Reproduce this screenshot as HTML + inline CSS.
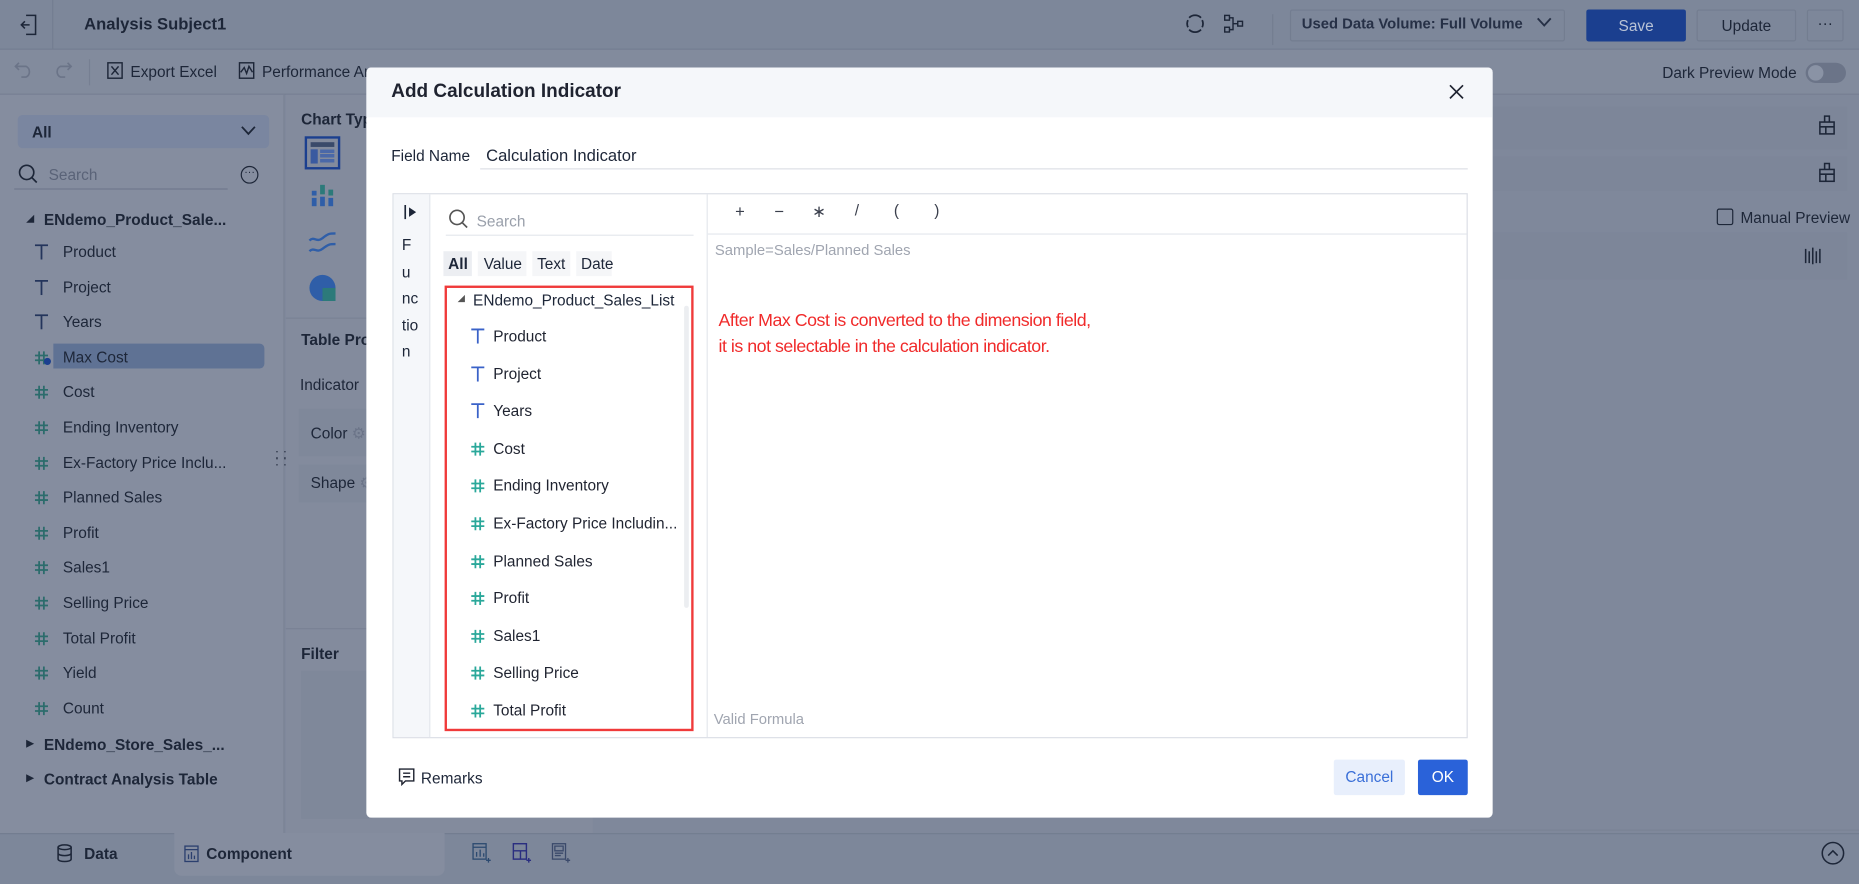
<!DOCTYPE html>
<html><head><meta charset="utf-8"><style>
*{box-sizing:border-box;margin:0;padding:0}
html,body{width:1859px;height:884px;overflow:hidden;background:#7f889b}
#w{position:absolute;left:0;top:0;width:1568px;height:746px;transform:scale(1.18559,1.185);transform-origin:0 0;font-family:"Liberation Sans",sans-serif;font-size:13px;color:#1d2638}
.a{position:absolute}
.t{position:absolute;white-space:nowrap}
</style></head><body><div id="w">
<!-- top bar -->
<div class="a" style="left:0;top:0;width:1568px;height:42px;background:#7d879a;border-bottom:1px solid #737d90"></div>
<div class="a" style="left:44px;top:0;width:1px;height:42px;background:#737d90"></div>
<svg class="a" style="left:16px;top:12px" width="16" height="18" viewBox="0 0 16 18" fill="none" stroke="#1d2638" stroke-width="1.3"><path d="M6 1h8v16H6M9 9H2M5 6L2 9l3 3"/></svg>
<div class="t" style="left:71px;top:12px;font-size:14px;font-weight:bold">Analysis Subject1</div>
<svg class="a" style="left:999px;top:11px" width="18" height="18" viewBox="0 0 18 18" fill="none" stroke="#1d2638" stroke-width="1.5"><path d="M4 4a7 7 0 0 1 10 0M14 14a7 7 0 0 1-10 0M3 6a7 7 0 0 0 0 6M15 6a7 7 0 0 1 0 6"/></svg>
<svg class="a" style="left:1032px;top:12px" width="18" height="16" viewBox="0 0 18 16" fill="none" stroke="#1d2638" stroke-width="1.2"><rect x="1" y="1" width="4" height="4"/><rect x="1" y="11" width="4" height="4"/><rect x="12" y="6" width="4" height="4"/><path d="M5 3h3v10H5M8 8h4"/></svg>
<div class="a" style="left:1073px;top:12px;width:1px;height:26px;background:#737d90"></div>
<div class="a" style="left:1088px;top:8px;width:232px;height:27px;border:1px solid #737d90;border-radius:2px"></div>
<div class="t" style="left:1098px;top:13px;font-size:12.5px;font-weight:bold;color:#263046">Used Data Volume: Full Volume</div>
<svg class="a" style="left:1296px;top:14px" width="13" height="9" viewBox="0 0 13 9" fill="none" stroke="#263046" stroke-width="1.6"><path d="M1 1.5l5.5 6 5.5-6"/></svg>
<div class="a" style="left:1338px;top:8px;width:84px;height:27px;background:#1b3f8f;border-radius:2px;color:#b9c3d6;text-align:center;line-height:27px;font-size:13px">Save</div>
<div class="a" style="left:1431px;top:8px;width:84px;height:27px;border:1px solid #737d90;border-radius:2px;text-align:center;line-height:25px;font-size:13px">Update</div>
<div class="a" style="left:1524px;top:8px;width:31px;height:27px;border:1px solid #737d90;border-radius:2px;text-align:center;line-height:22px;font-size:13px">···</div>
<!-- toolbar -->
<div class="a" style="left:0;top:42px;width:1568px;height:38px;background:#828b9d;border-bottom:1px solid #767f92"></div>
<svg class="a" style="left:12px;top:52px" width="16" height="14" viewBox="0 0 16 14" fill="none" stroke="#6b7488" stroke-width="1.4"><path d="M4 1L1 4l3 3M1 4h9a5 5 0 0 1 0 9H6"/></svg>
<svg class="a" style="left:45px;top:52px" width="16" height="14" viewBox="0 0 16 14" fill="none" stroke="#6b7488" stroke-width="1.4"><path d="M12 1l3 3-3 3M15 4H6a5 5 0 0 0 0 9h4"/></svg>
<div class="a" style="left:75px;top:50px;width:1px;height:22px;background:#767f92"></div>
<svg class="a" style="left:90px;top:52px" width="14" height="15" viewBox="0 0 14 15" fill="none" stroke="#1d2638" stroke-width="1.2"><rect x="1" y="1" width="12" height="13"/><path d="M4 4l6 7M10 4l-6 7"/></svg>
<div class="t" style="left:110px;top:53px">Export Excel</div>
<svg class="a" style="left:201px;top:52px" width="14" height="15" viewBox="0 0 14 15" fill="none" stroke="#1d2638" stroke-width="1.2"><rect x="1" y="1" width="12" height="13"/><path d="M2 9l3-4 2 5 2-6 3 5"/></svg>
<div class="t" style="left:221px;top:53px">Performance An</div>
<div class="t" style="left:1402px;top:54px">Dark Preview Mode</div>
<div class="a" style="left:1523px;top:53px;width:34px;height:17px;border-radius:9px;background:#6b7488"></div>
<div class="a" style="left:1525px;top:55px;width:13px;height:13px;border-radius:50%;background:#8a93a5"></div>
<!-- left panel -->
<div class="a" style="left:0;top:80px;width:240px;height:623px;background:#858d9f;border-right:1px solid #7a8295"></div>
<div class="a" style="left:15px;top:97px;width:212px;height:28px;background:#7a86a0;border-radius:4px"></div>
<div class="t" style="left:27px;top:104px;font-weight:bold">All</div>
<svg class="a" style="left:203px;top:106px" width="13" height="9" viewBox="0 0 13 9" fill="none" stroke="#1d2638" stroke-width="1.5"><path d="M1 1l5.5 6L12 1"/></svg>
<svg class="a" style="left:15px;top:138px" width="18" height="18" viewBox="0 0 18 18" fill="none" stroke="#1d2638" stroke-width="1.4"><circle cx="7.5" cy="7.5" r="6"/><path d="M12 12l4 4"/></svg>
<div class="t" style="left:41px;top:140px;color:#5a6378">Search</div>
<div class="a" style="left:12px;top:159px;width:180px;height:1px;background:#6f788c"></div>
<div class="a" style="left:203px;top:140px;width:15px;height:15px;border:1.3px solid #1d2638;border-radius:50%;font-size:9px;text-align:center;line-height:8px">···</div>
<div class="t" style="left:22px;top:179px;font-size:9px">◢</div>
<div class="t" style="left:37px;top:178px;font-weight:bold">ENdemo_Product_Sale...</div>
<div class="a" style="left:45px;top:290px;width:178px;height:21px;background:#5f7294;border-radius:0 4px 4px 0"></div>
<div id="lt"></div>
<div class="t" style="left:22px;top:622px;font-size:9px">▶</div>
<div class="t" style="left:37px;top:621px;font-weight:bold">ENdemo_Store_Sales_...</div>
<div class="t" style="left:22px;top:651px;font-size:9px">▶</div>
<div class="t" style="left:37px;top:650px;font-weight:bold">Contract Analysis Table</div>
<div class="t" style="left:232px;top:380px;font-size:12px;color:#2b3346;line-height:6px">: :<br>: :</div>
<!-- middle panel -->
<div class="a" style="left:241px;top:80px;width:259px;height:623px;background:#838b9d"></div>
<div class="t" style="left:254px;top:93px;font-weight:bold">Chart Typ</div>
<div class="a" style="left:257px;top:115px;width:30px;height:28px;border:2px solid #1b3f8f"></div>
<div class="a" style="left:262px;top:120px;width:20px;height:4px;background:#3a4a6a"></div>
<div class="a" style="left:262px;top:126px;width:6px;height:12px;background:#3a5aa0"></div>
<div class="a" style="left:270px;top:126px;width:12px;height:12px;background:repeating-linear-gradient(#4a68a8 0 3px,transparent 3px 4px)"></div>
<svg class="a" style="left:262px;top:155px" width="20" height="20" viewBox="0 0 20 20" fill="#2f5ea8"><rect x="1" y="6" width="4" height="4"/><rect x="1" y="12" width="4" height="7"/><rect x="8" y="1" width="4" height="8" fill="#2c7a7a"/><rect x="8" y="11" width="4" height="8"/><rect x="15" y="5" width="4" height="5" fill="#2c7a7a"/><rect x="15" y="12" width="4" height="7"/></svg>
<svg class="a" style="left:260px;top:195px" width="24" height="20" viewBox="0 0 24 20" fill="none" stroke="#2f5ea8" stroke-width="2"><path d="M1 8c4-4 6 2 11-2s6-4 11-4M1 17c4-4 6 2 11-2s6-4 11-4"/></svg>
<div class="a" style="left:261px;top:232px;width:22px;height:22px;border-radius:50%;background:#2f5ea8"></div>
<div class="a" style="left:272px;top:243px;width:11px;height:11px;background:#2c7a7a"></div>
<div class="a" style="left:241px;top:268px;width:259px;height:1px;background:#7a8295"></div>
<div class="t" style="left:254px;top:279px;font-weight:bold">Table Pro</div>
<div class="t" style="left:253px;top:317px">Indicator</div>
<div class="a" style="left:252px;top:345px;width:60px;height:40px;background:#7f889a"></div>
<div class="t" style="left:262px;top:358px">Color <span style="color:#6b7488">⚙</span></div>
<div class="a" style="left:252px;top:392px;width:60px;height:32px;background:#7f889a"></div>
<div class="t" style="left:262px;top:400px">Shape <span style="color:#6b7488">⚙</span></div>
<div class="a" style="left:241px;top:530px;width:259px;height:1px;background:#7a8295"></div>
<div class="t" style="left:254px;top:544px;font-weight:bold">Filter</div>
<div class="a" style="left:254px;top:566px;width:60px;height:125px;background:#7f889a"></div>
<!-- right area -->
<div class="a" style="left:1240px;top:90px;width:318px;height:36px;background:#7d8699"></div>
<div class="a" style="left:1240px;top:132px;width:318px;height:29px;background:#7d8699"></div>
<div class="a" style="left:1240px;top:196px;width:318px;height:40px;background:#7d8699"></div>
<svg class="a" style="left:1534px;top:97px" width="14" height="17" viewBox="0 0 14 17" fill="none" stroke="#1d2638" stroke-width="1.3"><rect x="1" y="6" width="12" height="10"/><path d="M5 6V1h4v5M1 10h12M6 10v6"/></svg>
<svg class="a" style="left:1534px;top:137px" width="14" height="17" viewBox="0 0 14 17" fill="none" stroke="#1d2638" stroke-width="1.3"><rect x="1" y="6" width="12" height="10"/><path d="M5 6V1h4v5M1 10h12M6 10v6"/></svg>
<div class="a" style="left:1448px;top:176px;width:14px;height:14px;border:1.3px solid #1d2638;border-radius:2px"></div>
<div class="t" style="left:1468px;top:176px">Manual Preview</div>
<svg class="a" style="left:1522px;top:208px" width="16" height="16" viewBox="0 0 16 16" stroke="#1d2638" stroke-width="1.3"><path d="M1 2v12M4 4v10M7 1v14M10 4v10M13 2v12"/></svg>
<div class="a" style="left:1240px;top:700px;width:328px;height:1px;background:#7a8295"></div>
<!-- bottom bar -->
<div class="a" style="left:0;top:703px;width:1568px;height:43px;background:#7d879a;border-top:1px solid #737d90"></div>
<div class="a" style="left:147px;top:703px;width:228px;height:36px;background:#858d9f;border-radius:0 0 6px 6px"></div>
<svg class="a" style="left:48px;top:712px" width="13" height="16" viewBox="0 0 13 16" fill="none" stroke="#1d2638" stroke-width="1.3"><ellipse cx="6.5" cy="3" rx="5.5" ry="2"/><path d="M1 3v10c0 2.7 11 2.7 11 0V3M1 8c0 2.7 11 2.7 11 0"/></svg>
<div class="t" style="left:71px;top:713px;font-weight:bold">Data</div>
<svg class="a" style="left:155px;top:713px" width="13" height="15" viewBox="0 0 13 15" fill="none" stroke="#2b3f6e" stroke-width="1.1"><rect x="1" y="1" width="11" height="13"/><path d="M1 4h11M4 12V8M6.5 12V6M9 12V9"/></svg>
<div class="t" style="left:174px;top:713px;font-weight:bold">Component</div>
<svg class="a" style="left:398px;top:711px" width="16" height="18" viewBox="0 0 16 18" fill="none" stroke="#2c4a70" stroke-width="1.1"><rect x="1" y="1" width="11" height="13"/><path d="M1 4h11M4 12V8M7 12V6M10 12V9M12 15h4M14 13v4"/></svg>
<svg class="a" style="left:432px;top:711px" width="16" height="18" viewBox="0 0 16 18" fill="none" stroke="#2a2e80" stroke-width="1.2"><rect x="1" y="1" width="11" height="13"/><path d="M1 7h11M7 7v7M12 15h4M14 13v4"/></svg>
<svg class="a" style="left:465px;top:711px" width="16" height="18" viewBox="0 0 16 18" fill="none" stroke="#3b4a6b" stroke-width="1.1"><rect x="1" y="1" width="11" height="13"/><path d="M3 3h7v4H3zM3 9h7M3 11h5M12 15h4M14 13v4"/></svg>
<svg class="a" style="left:1536px;top:710px" width="20" height="20" viewBox="0 0 20 20" fill="none" stroke="#1d2638" stroke-width="1.3"><circle cx="10" cy="10" r="9"/><path d="M6 12l4-4 4 4"/></svg>
<!-- dialog -->
<div class="a" style="left:309px;top:57px;width:950px;height:633px;background:#fff;border-radius:4px;overflow:hidden">
 <div class="a" style="left:0;top:0;width:950px;height:42px;background:#f5f7fa"></div>
</div>
<div class="t" style="left:330px;top:69px;font-size:16px;font-weight:bold;color:#1f2330">Add Calculation Indicator</div>
<svg class="a" style="left:1222px;top:71px" width="13" height="13" viewBox="0 0 13 13" stroke="#1f2330" stroke-width="1.4"><path d="M1 1l11 11M12 1L1 12"/></svg>
<div class="t" style="left:330px;top:124px;font-size:13px">Field Name</div>
<div class="t" style="left:410px;top:123px;font-size:14px">Calculation Indicator</div>
<div class="a" style="left:405px;top:142px;width:833px;height:1px;background:#dcdfe6"></div>
<div class="a" style="left:331px;top:163px;width:907px;height:460px;border:1px solid #dcdfe6"></div>
<div class="a" style="left:332px;top:164px;width:31px;height:458px;background:#f5f7fa;border-right:1px solid #e4e7ed"></div>
<svg class="a" style="left:341px;top:173px" width="12" height="12" viewBox="0 0 12 12" fill="#1d2638"><rect x="0" y="0" width="1.5" height="12"/><path d="M4 2l6 4-6 4z"/></svg>
<div class="t" style="left:339px;top:196px;font-size:13px;line-height:22.5px">F<br>u<br>nc<br>tio<br>n</div>
<div class="a" style="left:596px;top:164px;width:1px;height:458px;background:#e4e7ed"></div>
<div class="a" style="left:597px;top:197px;width:640px;height:1px;background:#e4e7ed"></div>
<div class="t" style="left:620px;top:170px;font-size:14px;color:#3a3f4c">+</div>
<div class="t" style="left:653px;top:170px;font-size:14px;color:#3a3f4c">−</div>
<div class="t" style="left:685px;top:170px;font-size:14px;color:#3a3f4c">∗</div>
<div class="t" style="left:721px;top:170px;font-size:13px;color:#3a3f4c">/</div>
<div class="t" style="left:754px;top:170px;font-size:13px;color:#3a3f4c">(</div>
<div class="t" style="left:788px;top:170px;font-size:13px;color:#3a3f4c">)</div>
<svg class="a" style="left:378px;top:176px" width="18" height="18" viewBox="0 0 18 18" fill="none" stroke="#555" stroke-width="1.4"><circle cx="7.5" cy="7.5" r="6"/><path d="M12 12l4 4"/></svg>
<div class="t" style="left:402px;top:179px;color:#9aa0ab">Search</div>
<div class="a" style="left:376px;top:198px;width:209px;height:1px;background:#e4e7ed"></div>
<div class="a" style="left:374px;top:212px;width:24px;height:21px;background:#eceef2"></div>
<div class="a" style="left:403px;top:212px;width:41px;height:21px;background:#f5f6f8"></div>
<div class="a" style="left:449px;top:212px;width:32px;height:21px;background:#f5f6f8"></div>
<div class="a" style="left:486px;top:212px;width:30px;height:21px;background:#f5f6f8"></div>
<div class="t" style="left:378px;top:215px;font-weight:bold">All</div>
<div class="t" style="left:408px;top:215px">Value</div>
<div class="t" style="left:453px;top:215px">Text</div>
<div class="t" style="left:490px;top:215px">Date</div>
<div class="a" style="left:375px;top:241px;width:210px;height:376px;border:2px solid #f03a3a"></div>
<div class="a" style="left:577px;top:258px;width:4px;height:255px;background:#eceef1;border-radius:2px"></div>
<div class="t" style="left:386px;top:247px;font-size:8px;color:#555">◢</div>
<div class="t" style="left:399px;top:246px">ENdemo_Product_Sales_List</div>
<div id="dt"></div>
<div class="t" style="left:606px;top:260px;font-size:15px;color:#f02a2a;line-height:22px;letter-spacing:-0.4px">After Max Cost is converted to the dimension field,<br>it is not selectable in the calculation indicator.</div>
<div class="t" style="left:603px;top:204px;color:#a0a5b0;font-size:12.5px">Sample=Sales/Planned Sales</div>
<div class="t" style="left:602px;top:600px;color:#a0a5b0;font-size:12.5px">Valid Formula</div>
<svg class="a" style="left:336px;top:648px" width="14" height="16" viewBox="0 0 14 16" fill="none" stroke="#1f2330" stroke-width="1.2"><path d="M1 1h12v10H6l-3 3v-3H1z"/><path d="M4 4.5h6M4 7.5h6"/></svg>
<div class="t" style="left:355px;top:649px">Remarks</div>
<div class="a" style="left:1125px;top:641px;width:60px;height:30px;background:#e8effc;border-radius:2px;color:#3a6fd8;text-align:center;line-height:30px">Cancel</div>
<div class="a" style="left:1196px;top:641px;width:42px;height:30px;background:#2a62d9;border-radius:2px;color:#fff;text-align:center;line-height:30px">OK</div>
</div>
<script>
function T(x,y,c){return '<svg class="a" style="left:'+x+'px;top:'+y+'px" width="12" height="13" viewBox="0 0 12 13" fill="none" stroke="'+c+'" stroke-width="1.5"><path d="M0.5 1h11M6 1v12"/></svg>';}
function H(x,y,c){return '<svg class="a" style="left:'+x+'px;top:'+y+'px" width="12" height="12" viewBox="0 0 12 12" fill="none" stroke="'+c+'" stroke-width="1.5"><path d="M4 0.5v11M8 0.5v11M0.5 4h11M0.5 8h11"/></svg>';}
var L=[["T","Product"],["T","Project"],["T","Years"],["H","Max Cost"],["#","Cost"],["#","Ending Inventory"],["#","Ex-Factory Price Inclu..."],["#","Planned Sales"],["#","Profit"],["#","Sales1"],["#","Selling Price"],["#","Total Profit"],["#","Yield"],["#","Count"]];
var h="";L.forEach(function(e,i){var y=205+i*29.6;
var ic=e[0]=="T"?T(29,y+1,"#24355c"):H(29,y+2,"#2c6c6c");
if(e[0]=="H")ic+='<div class="a" style="left:37px;top:'+(y+8)+'px;width:6px;height:6px;border-radius:50%;background:#1b3f8f"></div>';
h+=ic+'<div class="t" style="left:53px;top:'+y+'px">'+e[1]+'</div>';});
document.getElementById("lt").innerHTML=h;
var D=[["T","Product"],["T","Project"],["T","Years"],["#","Cost"],["#","Ending Inventory"],["#","Ex-Factory Price Includin..."],["#","Planned Sales"],["#","Profit"],["#","Sales1"],["#","Selling Price"],["#","Total Profit"]];
h="";D.forEach(function(e,i){var y=276+i*31.6;
var ic=e[0]=="T"?T(397,y+1,"#3a62c8"):H(397,y+2,"#2aa89a");
h+=ic+'<div class="t" style="left:416px;top:'+y+'px;color:#1f2330">'+e[1]+'</div>';});
document.getElementById("dt").innerHTML=h;
</script>
</body></html>
